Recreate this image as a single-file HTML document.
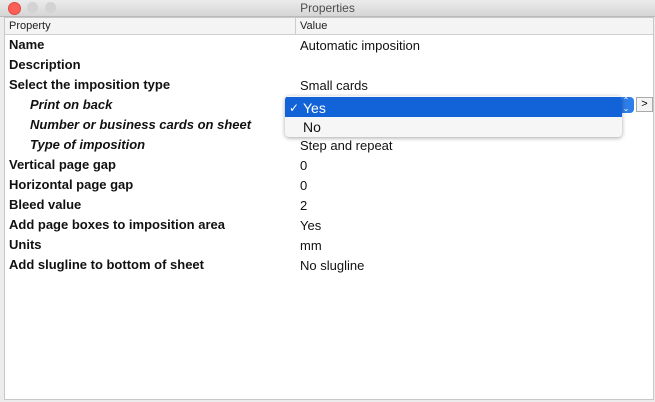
<!DOCTYPE html><html><head><style>
body{margin:0;width:655px;height:402px;background:#ececec;font-family:"Liberation Sans",sans-serif;position:relative;overflow:hidden}
.tb{position:absolute;left:0;top:0;width:655px;height:16px;background:linear-gradient(#ebebeb,#d6d6d6);border-bottom:1px solid #b9b9b9;text-align:center;font-size:12px;line-height:16px;color:#4d4d4d}
.dot{position:absolute;top:2px;width:11px;height:11px;border-radius:50%}
.pane{position:absolute;left:4px;top:17px;width:648px;height:381px;background:#fff;border:1px solid #c8c8c8}
.hd{position:absolute;left:0;top:0;width:648px;height:16px;background:#f4f4f4;border-bottom:1px solid #d0d0d0;font-size:11px;line-height:16px;color:#222}
.r{position:absolute;font-size:13px;color:#111;white-space:nowrap}
.b{font-weight:bold;margin-top:1px}
.pop{position:absolute;left:285px;top:96px;width:337px;height:41px;background:#f6f6f6;border-radius:4px;box-shadow:0 1px 4px rgba(0,0,0,.35);overflow:hidden}
</style></head><body>
<div class="tb">Properties
<div class="dot" style="left:8px;background:#fc5f57;border:0.5px solid #de4a42"></div>
<div class="dot" style="left:27px;background:#d3d3d3"></div>
<div class="dot" style="left:45px;background:#d3d3d3"></div></div>
<div class="pane"><div class="hd"><span style="position:absolute;left:4px">Property</span><span style="position:absolute;left:290px;border-left:1px solid #ccc;padding-left:4px;height:16px">Value</span></div></div>
<div class="r b" style="left:9px;top:36px">Name</div><div class="r" style="left:300px;top:38px">Automatic imposition</div>
<div class="r b" style="left:9px;top:56px">Description</div>
<div class="r b" style="left:9px;top:76px">Select the imposition type</div><div class="r" style="left:300px;top:78px">Small cards</div>
<div class="r b" style="left:30px;top:96px;font-style:italic">Print on back</div>
<div class="r b" style="left:30px;top:116px;font-style:italic">Number or business cards on sheet</div>
<div class="r b" style="left:30px;top:136px;font-style:italic">Type of imposition</div><div class="r" style="left:300px;top:138px">Step and repeat</div>
<div class="r b" style="left:9px;top:156px">Vertical page gap</div><div class="r" style="left:300px;top:158px">0</div>
<div class="r b" style="left:9px;top:176px">Horizontal page gap</div><div class="r" style="left:300px;top:178px">0</div>
<div class="r b" style="left:9px;top:196px">Bleed value</div><div class="r" style="left:300px;top:198px">2</div>
<div class="r b" style="left:9px;top:216px">Add page boxes to imposition area</div><div class="r" style="left:300px;top:218px">Yes</div>
<div class="r b" style="left:9px;top:236px">Units</div><div class="r" style="left:300px;top:238px">mm</div>
<div class="r b" style="left:9px;top:256px">Add slugline to bottom of sheet</div><div class="r" style="left:300px;top:258px">No slugline</div>
<div style="position:absolute;left:618px;top:97px;width:16px;height:16px;background:#2f7de9;border-radius:4px;color:#fff;font-size:8px;line-height:8px;text-align:center">⌃<br>⌄</div>
<div style="position:absolute;left:636px;top:97px;width:15px;height:13px;background:#f4f4f4;border:1px solid #aaa;font-size:11px;line-height:13px;text-align:center">&gt;</div>
<div class="pop"><div style="position:absolute;left:0;top:1px;width:337px;height:20px;background:#1363d8;color:#fff;font-size:14px;line-height:22px"><span style="position:absolute;left:4px;font-size:12px">✓</span><span style="position:absolute;left:18px">Yes</span></div>
<div style="position:absolute;left:18px;top:21px;font-size:14px;line-height:21px;color:#111">No</div></div>
</body></html>
